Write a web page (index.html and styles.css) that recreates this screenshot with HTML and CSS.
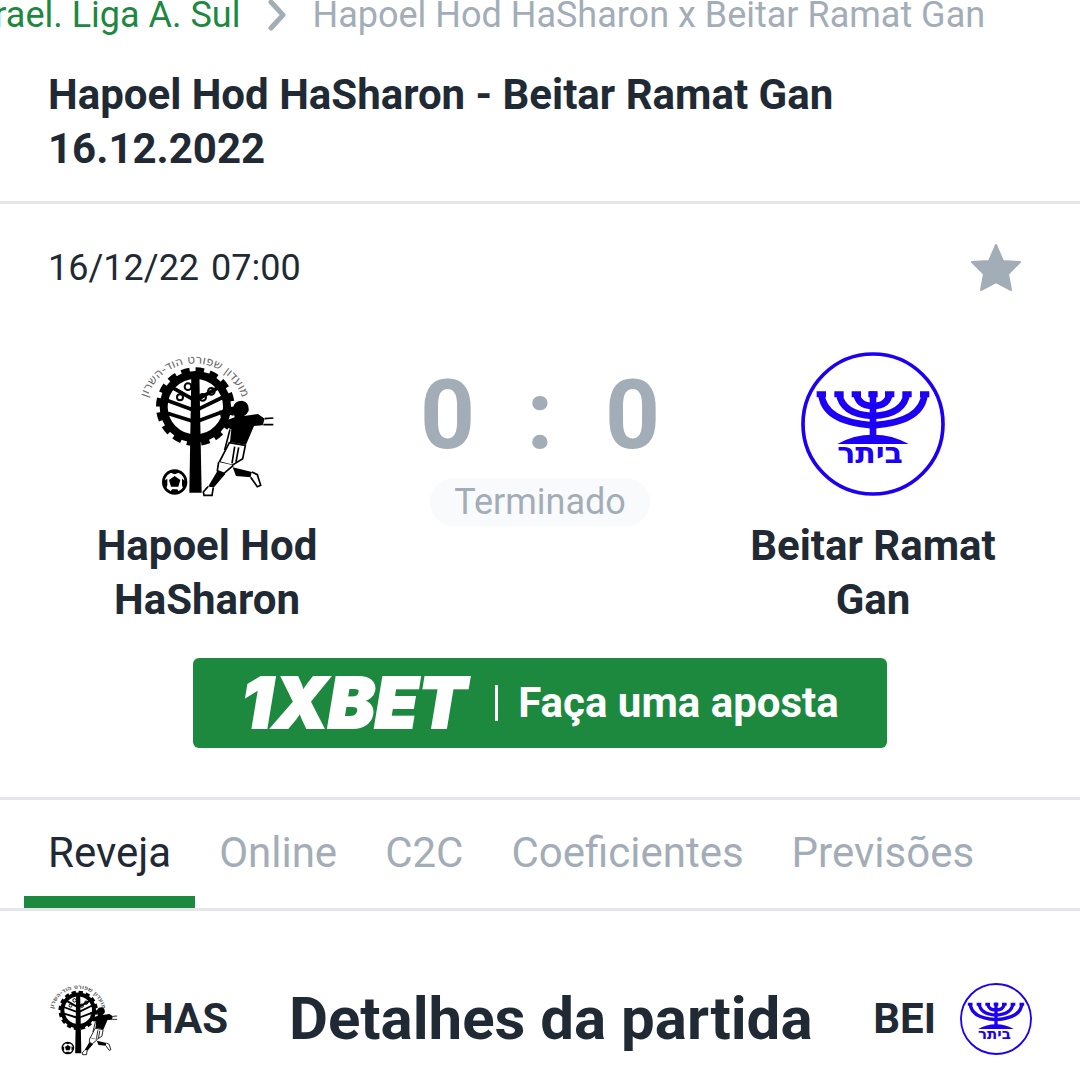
FILE: index.html
```html
<!DOCTYPE html>
<html lang="pt">
<head>
    <meta charset="UTF-8">
    <meta name="viewport" content="width=device-width, initial-scale=1.0">
    <title>Hapoel Hod HaSharon - Beitar Ramat Gan</title>
    <link rel="stylesheet" href="styles.css">
</head>
<body>
    <!-- Team crests, reused in the match card and in the details header -->
    <svg class="sprite" aria-hidden="true">
        <symbol id="crest-has" viewBox="15 36 432 432" overflow="visible">
            <path id="has-arc" d="M46 196 A 150 150 0 0 1 342 196" fill="none"/>
            <text class="crest-text-has"><textPath href="#has-arc" startOffset="50%">מועדון שפורט הוד-השרון</textPath></text>
            <circle cx="196" cy="200" r="95" fill="none" stroke="#000" stroke-width="24"/>
            <circle cx="196" cy="200" r="108" fill="none" stroke="#000" stroke-width="20" stroke-dasharray="25 17.4"/>
            <path d="M178 458 L184 100 H208 L215 458 Z"/>
            <path d="M196 182 L122 140 M196 212 L108 180 M196 246 L112 220 M196 182 L270 140 M196 212 L286 168 M196 246 L282 214" fill="none" stroke="#000" stroke-width="11"/>
            <g fill="none" stroke="#000" stroke-width="6">
                <circle cx="174" cy="140" r="10"/><circle cx="150" cy="172" r="9"/>
                <circle cx="218" cy="172" r="10"/><circle cx="244" cy="154" r="10"/>
            </g>
            <path d="M308 206 Q312 182 336 182 Q358 186 356 212 Q352 222 342 228 L384 222 L404 236 L398 256 L372 258 L348 314 L300 306 L304 268 L290 262 L292 240 L314 232 Z"/>
            <path d="M298 308 L346 316 L338 356 L306 376 L268 366 Z" fill="#fff" stroke="#000" stroke-width="5"/>
            <path d="M270 212 L280 252 L296 262 M404 236 L430 234 M400 254 L430 254 M300 268 L284 330 M314 320 L306 370 M326 322 L318 366" fill="none" stroke="#000" stroke-width="5"/>
            <path d="M264 390 L286 402 L252 442 L234 440 Z M308 382 L366 396 L362 412 L318 408 Z"/>
            <path d="M266 366 L262 392 L282 400 L310 376 M234 440 L220 456 L222 466 L246 466 L250 442 M366 396 L382 404 L392 436 L382 440 L362 412" fill="#fff" stroke="#000" stroke-width="5"/>
            <circle cx="134" cy="426" r="34" fill="#fff" stroke="#000" stroke-width="8"/>
            <path d="M134 408 L151 420 L145 440 H123 L117 420 Z M116 396 L134 390 L152 396 L134 403 Z M101 424 L112 416 L112 436 L108 446 Z M167 424 L156 416 L156 436 L160 446 Z M120 458 L126 448 H142 L148 458 Z"/>
        </symbol>
        <symbol id="crest-bei" viewBox="33 36 432 432">
            <circle cx="249" cy="252" r="210" fill="#fff" stroke="#1c00f5" stroke-width="11"/>
            <g fill="none" stroke="#1c00f5" stroke-width="20">
                <path d="M249 154 V290"/>
                <path d="M199 158 Q203 198 249 198 Q295 198 299 158"/>
                <path d="M147 158 Q155 224 249 228 Q343 224 351 158"/>
                <path d="M94 158 Q98 246 249 256 Q400 246 404 158"/>
                <path stroke-width="18" d="M80 163 H108 M133 163 H161 M185 163 H213 M235 163 H263 M285 163 H313 M337 163 H365 M390 163 H418"/>
            </g>
            <path d="M142 312 Q190 284 249 284 Q308 284 356 312 Z" fill="#1c00f5"/>
            <text class="crest-text-bei" x="240" y="370">ביתר</text>
        </symbol>
    </svg>

    <nav class="breadcrumbs">
        <a href="#">Israel. Liga A. Sul</a>
        <svg class="chevron" viewBox="0 0 20 32" aria-hidden="true"><path d="M5 3 L17 16 L5 29"/></svg>
        <span>Hapoel Hod HaSharon x Beitar Ramat Gan</span>
    </nav>

    <h1>Hapoel Hod HaSharon - Beitar Ramat Gan 16.12.2022</h1>

    <!-- Match card -->
    <section class="match">
        <div class="match-top">
            <time datetime="2022-12-16T07:00"><span>16/12/22</span><span>07:00</span></time>
            <button class="favorite" aria-label="Favorito">
                <svg viewBox="0 0 50 48"><path d="M25 1 L32 17 L49 18 L37 30 L40 46 L25 38 L10 46 L13 30 L1 18 L18 17 Z"/></svg>
            </button>
        </div>
        <div class="teams">
            <div class="team">
                <svg class="crest"><use href="#crest-has"/></svg>
                <h2>Hapoel Hod HaSharon</h2>
            </div>
            <div class="result">
                <div class="score"><span>0</span><span>:</span><span>0</span></div>
                <span class="status">Terminado</span>
            </div>
            <div class="team">
                <svg class="crest"><use href="#crest-bei"/></svg>
                <h2>Beitar Ramat Gan</h2>
            </div>
        </div>
        <a class="bet-btn" href="#">
            <span class="bet-logo">1XBET</span>
            <span class="bet-label">Faça uma aposta</span>
        </a>
    </section>

    <!-- Tabs -->
    <nav class="tabs">
        <a class="active" href="#">Reveja</a>
        <a href="#">Online</a>
        <a href="#">C2C</a>
        <a href="#">Coeficientes</a>
        <a href="#">Previsões</a>
    </nav>

    <!-- Match details -->
    <section class="details">
        <div class="short-team">
            <svg class="crest-small"><use href="#crest-has"/></svg>
            <span>HAS</span>
        </div>
        <h2>Detalhes da partida</h2>
        <div class="short-team">
            <span>BEI</span>
            <svg class="crest-small"><use href="#crest-bei"/></svg>
        </div>
    </section>
</body>
</html>
```
FILE: styles.css
```css
* {
    box-sizing: border-box;
}
body {
    margin: 0;
    font-family: Roboto, sans-serif;
    font-size: 42px;
    line-height: 54px;
    color: #1f2a35;
    background-color: #fff;
    overflow-x: hidden;
}
h1, h2 {
    margin: 0;
    font-size: 42px;
    font-weight: bold;
}
a {
    text-decoration: none;
}
.sprite {
    position: absolute;
    width: 0;
    height: 0;
}
.breadcrumbs {
    display: flex;
    align-items: center;
    gap: 26px;
    height: 44px;
    margin-top: -7px;
    margin-left: -34px;
    font-size: 36px;
    line-height: 44px;
    white-space: nowrap;
    color: #a3adb8;
}
.breadcrumbs a {
    color: #1c893f;
}
.chevron {
    width: 20px;
    height: 32px;
    fill: none;
    stroke: #a3adb8;
    stroke-width: 5;
    stroke-linecap: round;
    stroke-linejoin: round;
}
h1 {
    padding: 31px 48px 25px;
    border-bottom: 3px solid #e4e6eb;
}
.match {
    padding: 40px 48px 49px;
    border-bottom: 3px solid #e4e6eb;
}
.match-top {
    display: flex;
    justify-content: space-between;
    align-items: center;
    font-size: 36px;
    line-height: 48px;
}
.match-top time {
    display: flex;
    gap: 12px;
}
.favorite {
    width: 72px;
    height: 48px;
    padding: 0 11px;
    border: none;
    background: none;
    cursor: pointer;
}
.favorite svg {
    display: block;
    width: 50px;
    height: 48px;
    fill: #a3adb8;
    stroke: #a3adb8;
    stroke-width: 2;
    stroke-linejoin: round;
}
.teams {
    display: grid;
    grid-template-columns: 1fr 348px 1fr;
    margin-top: 60px;
}
.team {
    padding: 0 24px;
    text-align: center;
}
.crest {
    display: block;
    width: 144px;
    height: 144px;
    margin: 0 auto 23px;
    overflow: visible;
}
.result {
    display: flex;
    flex-direction: column;
    align-items: center;
}
.score {
    display: flex;
    justify-content: space-between;
    width: 240px;
    font-size: 96px;
    font-weight: bold;
    line-height: 126px;
    color: #a3adb8;
}
.status {
    padding: 0 24px;
    border-radius: 24px;
    font-size: 36px;
    line-height: 48px;
    color: #a3adb8;
    background-color: #f8fafc;
}
.bet-btn {
    display: flex;
    align-items: center;
    width: fit-content;
    height: 90px;
    margin: 31px auto 0;
    padding: 0 48px;
    border-radius: 6px;
    font-weight: bold;
    color: #fff;
    background-color: #1c893f;
}
.bet-logo {
    min-width: 230px;
    font-family: Inter, Roboto, sans-serif;
    font-size: 70px;
    font-weight: 900;
    font-style: italic;
    -webkit-text-stroke: 2px #fff;
}
.bet-label {
    margin-left: 24px;
    padding-left: 20px;
    border-left: 3px solid #fff;
    line-height: 36px;
}
.tabs {
    display: flex;
    padding: 0 24px;
    border-bottom: 3px solid #e4e6eb;
}
.tabs a {
    padding: 26px 24px 16px;
    border-bottom: 12px solid transparent;
    color: #a3adb8;
}
.tabs .active {
    color: #1f2a35;
    border-color: #1c893f;
}
.details {
    display: flex;
    justify-content: space-between;
    align-items: center;
    padding: 72px 48px 25px;
}
.details h2 {
    font-size: 60px;
    line-height: 72px;
}
.short-team {
    display: flex;
    align-items: center;
    gap: 24px;
    font-weight: bold;
}
.crest-small {
    width: 72px;
    height: 72px;
    overflow: visible;
}
.crest-text-has {
    font-family: "DejaVu Sans", sans-serif;
    font-size: 36px;
    text-anchor: middle;
    fill: #666;
}
.crest-text-bei {
    font-family: "DejaVu Sans", sans-serif;
    font-size: 90px;
    font-weight: bold;
    text-anchor: middle;
    fill: #1c00f5;
}
```
